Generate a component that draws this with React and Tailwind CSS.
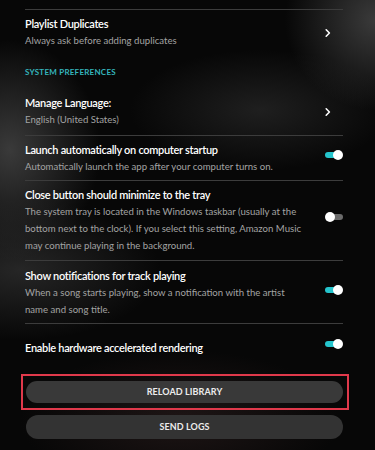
import React from 'react';

function Toggle({ on }) {
    return (
        <div className="relative w-[18px] h-[10px] flex-none flex items-center mb-[7px]">
            <div className={`w-[14px] h-[6px] rounded-full ${on ? 'bg-[#25c4cc] ml-0' : 'bg-[#6b6b6b] ml-[4px]'}`} />
            <div className={`absolute top-0 w-[10px] h-[10px] rounded-full bg-white ${on ? 'right-0' : 'left-0'}`} />
        </div>
    );
}

function Chevron() {
    return (
        <svg width="8" height="10" viewBox="0 0 8 10" className="flex-none mr-[11px]">
            <path d="M2.2 1.8 L5.4 5 L2.2 8.2" stroke="#ffffff" strokeWidth="1.6" fill="none" strokeLinecap="round" strokeLinejoin="round" />
        </svg>
    );
}

function Row({ title, desc, right, border = true, className = '' }) {
    return (
        <div className={`flex items-center justify-between gap-4 ${border ? 'border-b border-[#3c3c3c]' : ''} ${className}`}>
            <div className="min-w-0">
                <p className="text-[11px] font-semibold text-white leading-[16px] tracking-[-0.3px] whitespace-nowrap">{title}</p>
                {desc && <p className="text-[9.6px] text-[#a3a3a3] leading-[17px] whitespace-nowrap">{desc}</p>}
            </div>
            {right}
        </div>
    );
}

export default function App() {
    return (
        <div
            className="w-[375px] h-[450px] overflow-hidden bg-[#070707] bg-[radial-gradient(ellipse_90px_110px_at_10px_150px,#3a3a3a_0%,transparent_100%),radial-gradient(ellipse_140px_70px_at_20px_270px,#262626_0%,transparent_100%),radial-gradient(ellipse_90px_90px_at_375px_20px,#3a3a3a_0%,transparent_100%),radial-gradient(ellipse_160px_70px_at_180px_420px,#1e1515_0%,transparent_100%),radial-gradient(ellipse_130px_60px_at_260px_110px,#1f1f1f_0%,transparent_100%)]"
            style={{ fontFamily: 'Lato, "Open Sans", sans-serif' }}
        >
            <div className="pl-[25px] pr-[32px] pt-[9px]">
                <div className="border-t border-[#3c3c3c]" />

                <Row
                    title="Playlist Duplicates"
                    desc="Always ask before adding duplicates"
                    right={<Chevron />}
                    border={false}
                    className="pt-[6px]"
                />

                <p className="mt-[19px] text-[8px] font-bold tracking-[0.03em] text-[#35b5bd] uppercase leading-[8px]">System Preferences</p>

                <Row
                    title="Manage Language:"
                    desc="English (United States)"
                    right={<Chevron />}
                    className="pt-[19px] pb-[7px]"
                />

                <Row
                    title="Launch automatically on computer startup"
                    desc="Automatically launch the app after your computer turns on."
                    right={<Toggle on />}
                    className="pt-[6px] pb-[5px]"
                />

                <Row
                    title="Close button should minimize to the tray"
                    desc={<>The system tray is located in the Windows taskbar (usually at the<br />bottom next to the clock). If you select this setting, Amazon Music<br />may continue playing in the background.</>}
                    right={<Toggle />}
                    className="pt-[6px] pb-[6px]"
                />

                <Row
                    title="Show notifications for track playing"
                    desc={<>When a song starts playing, show a notification with the artist<br />name and song title.</>}
                    right={<Toggle on />}
                    className="pt-[7px] pb-[5px]"
                />

                <Row
                    title="Enable hardware accelerated rendering"
                    right={<Toggle on />}
                    border={false}
                    className="pt-[15px]"
                />

                <div className="mt-[18px] -ml-[4px] -mr-[6px] border-2 border-[#e0394b] pl-[3px] pr-[4px] py-[5px]">
                    <button className="block w-full h-[22px] rounded-full bg-[#393939] text-[#ececec] text-[9px] font-bold uppercase tracking-[0.01em]">Reload Library</button>
                </div>
                <button className="block mt-[5px] ml-[1px] w-[317px] h-[24px] rounded-full bg-[#333333] text-[#ececec] text-[9px] font-bold uppercase tracking-[0.01em]">Send Logs</button>
            </div>
        </div>
    );
}
